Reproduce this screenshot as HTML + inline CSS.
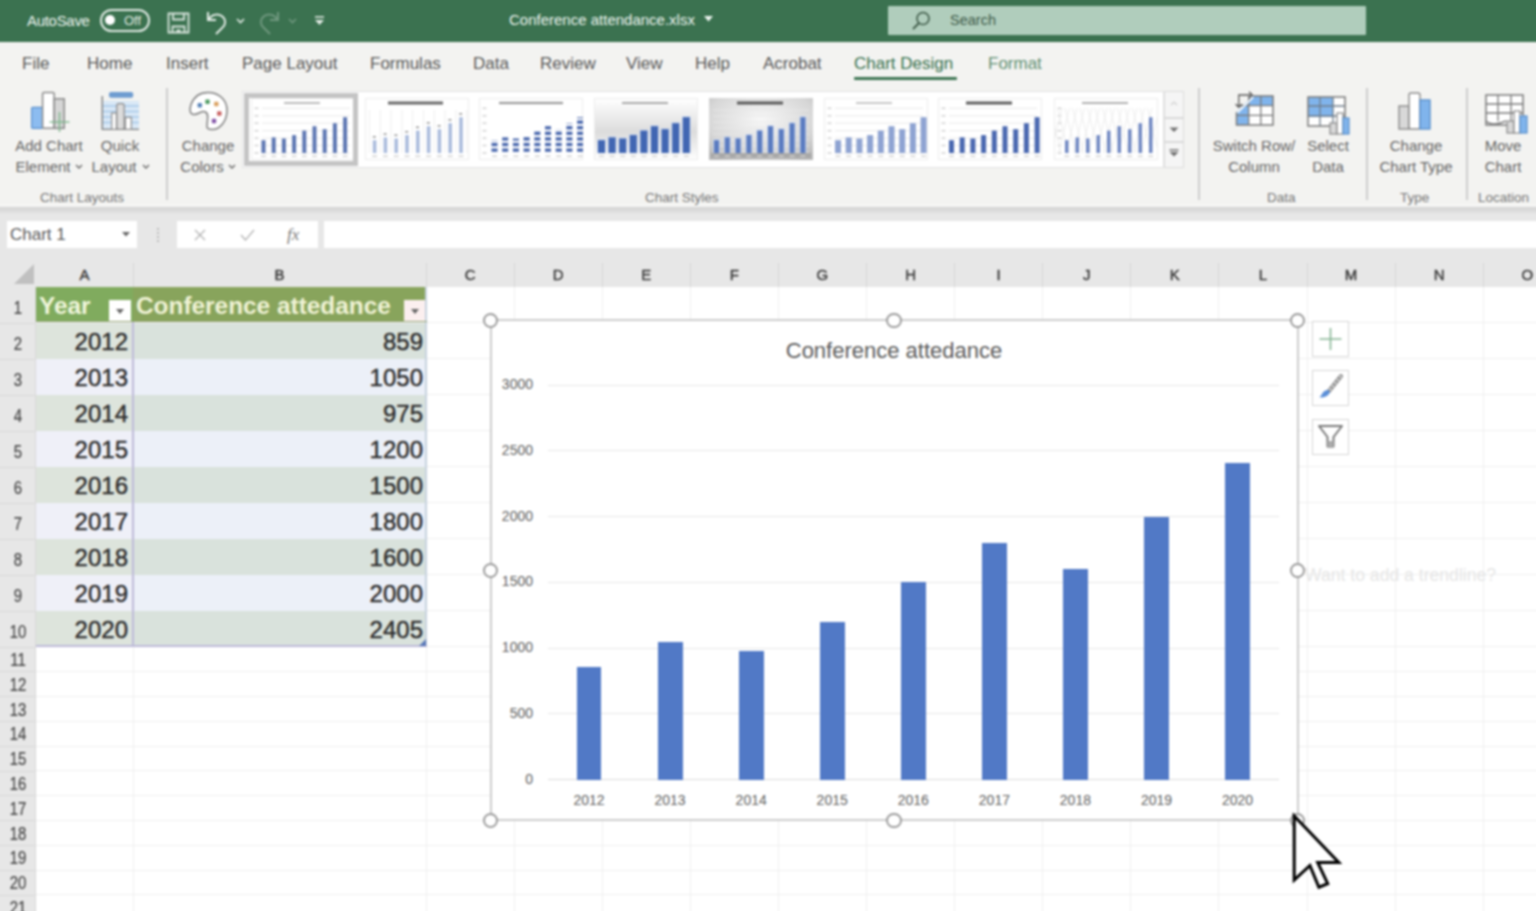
<!DOCTYPE html>
<html><head><meta charset="utf-8">
<style>
*{margin:0;padding:0;box-sizing:border-box}
html,body{width:1536px;height:911px;overflow:hidden;background:#fff;font-family:"Liberation Sans",sans-serif}
#root{position:absolute;left:0;top:0;width:1536px;height:911px;filter:blur(1px)}
.a{position:absolute}
.t{position:absolute;white-space:nowrap;line-height:1}
.tab{font-size:17px;color:#585858;top:55px}
.rl{font-size:15px;color:#656565;text-align:center}
.gl{font-size:13.5px;color:#767676}
.sep{position:absolute;width:1.5px;background:#cdcdcd;top:88px;height:112px}
.rh{position:absolute;left:0;width:36px;color:#4a4a4a;font-size:15px;text-align:center;-webkit-text-stroke:0.2px #4a4a4a}
.rh span{display:inline-block;transform:scaleY(1.2)}
.ch{position:absolute;top:262px;height:25px;color:#3a3a3a;font-size:15px;text-align:center;line-height:25px;-webkit-text-stroke:0.4px #3a3a3a}
.cell{position:absolute;font-size:24px;color:#2e2e2e;text-align:right;line-height:36px;-webkit-text-stroke:0.45px #2e2e2e}
</style></head><body><div id="root">

<div class="a" style="left:-20px;top:-20px;width:1576px;height:62px;background:#3b7250"></div>
<div class="a" style="left:-20px;top:42px;width:1576px;height:165px;background:#f3f3f1"></div>
<div class="a" style="left:-20px;top:207px;width:1576px;height:80px;background:#e7e7e7"></div>
<div class="a" style="left:-20px;top:204px;width:1576px;height:2px;background:#f6f6f5"></div><div class="a" style="left:-20px;top:207px;width:1576px;height:7px;background:linear-gradient(#d6d6d6,#d8d8d8 40%,#e7e7e7)"></div>

<div class="t" style="left:27px;top:13px;font-size:15px;color:#eef5f0;letter-spacing:-0.3px">AutoSave</div>
<div class="a" style="left:100px;top:9px;width:50px;height:23px;border:2px solid #dfe9e2;border-radius:12px"></div>
<div class="a" style="left:105px;top:15px;width:10px;height:10px;border-radius:50%;background:#fff"></div>
<div class="t" style="left:124px;top:14px;font-size:13px;color:#e0ebe3">Off</div>
<svg class="a" style="left:167px;top:12px" width="24" height="22" viewBox="0 0 24 22"><path d="M1.5 1.5h20v19h-20z" fill="none" stroke="#d8e4dc" stroke-width="1.8"/><path d="M6 1.5v6h11v-6M5.5 20.5v-6h12v6" fill="none" stroke="#d8e4dc" stroke-width="1.8"/><path d="M9.5 20.5v-3h4v3" fill="#d8e4dc"/></svg>
<svg class="a" style="left:204px;top:9px" width="26" height="26" viewBox="0 0 26 26"><path d="M4 3v8h8" fill="none" stroke="#e2ebe5" stroke-width="2"/><path d="M5 10c3-5 10-6 14-2 3 3 3 8-1 11l-6 6" fill="none" stroke="#e2ebe5" stroke-width="2"/></svg>
<svg class="a" style="left:236px;top:18px" width="9" height="6" viewBox="0 0 9 6"><path d="M1 1l3.5 3.5L8 1" fill="none" stroke="#e2ebe5" stroke-width="1.6"/></svg>
<svg class="a" style="left:256px;top:9px;opacity:.3" width="26" height="26" viewBox="0 0 26 26"><path d="M22 3v8h-8" fill="none" stroke="#e6eee8" stroke-width="2"/><path d="M21 10c-3-5-10-6-14-2-3 3-3 8 1 11l6 6" fill="none" stroke="#e6eee8" stroke-width="2"/></svg>
<svg class="a" style="left:288px;top:18px;opacity:.3" width="9" height="6" viewBox="0 0 9 6"><path d="M1 1l3.5 3.5L8 1" fill="none" stroke="#e6eee8" stroke-width="1.6"/></svg>
<svg class="a" style="left:314px;top:15px" width="11" height="12" viewBox="0 0 11 12"><path d="M1 2h9" stroke="#e2ebe5" stroke-width="1.6"/><path d="M1 5h9l-4.5 5z" fill="#e2ebe5"/></svg>
<div class="t" style="left:509px;top:12px;font-size:15px;color:#eef5f0">Conference attendance.xlsx</div>
<svg class="a" style="left:704px;top:16px" width="9" height="6" viewBox="0 0 9 6"><path d="M0 0h9L4.5 5.5z" fill="#eef5f0"/></svg>
<div class="a" style="left:888px;top:6px;width:478px;height:29px;background:#b0cdbc;border-radius:1px"></div>
<svg class="a" style="left:910px;top:10px" width="22" height="22" viewBox="0 0 22 22"><circle cx="13" cy="8.5" r="6" fill="none" stroke="#3e5a48" stroke-width="1.6"/><path d="M9 13l-6 6" stroke="#3e5a48" stroke-width="1.8"/></svg>
<div class="t" style="left:950px;top:13px;font-size:14.5px;color:#3e5a48">Search</div>

<div class="t tab" style="left:22px;color:#585858">File</div>
<div class="t tab" style="left:87px;color:#585858">Home</div>
<div class="t tab" style="left:166px;color:#585858">Insert</div>
<div class="t tab" style="left:242px;color:#585858">Page Layout</div>
<div class="t tab" style="left:370px;color:#585858">Formulas</div>
<div class="t tab" style="left:473px;color:#585858">Data</div>
<div class="t tab" style="left:540px;color:#585858">Review</div>
<div class="t tab" style="left:626px;color:#585858">View</div>
<div class="t tab" style="left:695px;color:#585858">Help</div>
<div class="t tab" style="left:763px;color:#585858">Acrobat</div>
<div class="t tab" style="left:854px;color:#36704c">Chart Design</div>
<div class="t tab" style="left:988px;color:#5f8f71">Format</div>
<div class="a" style="left:854px;top:77px;width:103px;height:3px;background:#3c7452;border-radius:1px"></div>

<svg class="a" style="left:29px;top:89px" width="44" height="46" viewBox="0 0 44 46">
 <rect x="2.6" y="18.3" width="11" height="21" rx="1" fill="#8cbcf0" stroke="#5a8fcc" stroke-width="1.2"/>
 <rect x="13.6" y="3.6" width="11.6" height="35.7" rx="1.5" fill="#fff" stroke="#8a8a8a" stroke-width="1.5"/>
 <rect x="25.2" y="9.8" width="10" height="29.5" fill="#d6d6d6" stroke="#8a8a8a" stroke-width="1.5"/>
 <path d="M30.5 23v20M20.5 33h20" stroke="#78b488" stroke-width="1.6" opacity=".85"/>
</svg>
<svg class="a" style="left:100px;top:89px" width="42" height="44" viewBox="0 0 42 44">
 <rect x="9" y="2.9" width="24.2" height="5.8" rx="2" fill="#6e9cd0"/>
 <rect x="2.3" y="11.8" width="36.7" height="28.6" fill="#d9e8f6"/>
 <path d="M2.3 17h36.7M2.3 22.5h36.7M2.3 28h36.7M2.3 33.5h36.7" stroke="#a8c8e8" stroke-width="1.6"/>
 <path d="M2.3 7v33.4H39" fill="none" stroke="#7e7e7e" stroke-width="1.4"/>
 <rect x="11.7" y="24" width="4.7" height="16.4" fill="#fff" stroke="#8a8a8a" stroke-width="1.2"/>
 <rect x="16.8" y="14.6" width="7.4" height="25.8" rx="2" fill="#dcdcdc" stroke="#8a8a8a" stroke-width="1.2"/>
 <rect x="25.4" y="28.3" width="5.9" height="12.1" fill="#fff" stroke="#8a8a8a" stroke-width="1.2"/>
</svg>
<svg class="a" style="left:188px;top:90px" width="42" height="42" viewBox="0 0 42 42">
 <path d="M19 36.5C19 30 21.5 24 17.5 22C13.5 20 10 25 5.5 24.5C1.5 24 1.5 19 3 14.5C6 6.5 12 2.5 20 2.5C31 2.5 39 10 39 20.5C39 31 32 39.5 24 39.5C21 39.5 19 38.5 19 36.5Z" fill="#fff" stroke="#808080" stroke-width="1.5"/>
 <rect x="9.6" y="13" width="4.4" height="4.4" rx="1.2" fill="#5a84b8"/><rect x="17.3" y="9.6" width="4.4" height="4.4" rx="1.2" fill="#4e9a62"/><rect x="26.1" y="11.8" width="4.4" height="4.4" rx="1.2" fill="#d9a060"/><rect x="29.1" y="21.3" width="4.4" height="4.4" rx="1.2" fill="#c86060"/><rect x="23.8" y="28.8" width="4.4" height="4.4" rx="1.2" fill="#8456a8"/>
</svg>
<div class="t rl" style="left:10px;top:138px;width:78px">Add Chart</div>
<div class="t rl" style="left:4px;top:159px;width:78px">Element</div><svg class="a" style="left:75px;top:164px" width="8" height="5" viewBox="0 0 8 5"><path d="M1 1l3 3 3-3" fill="none" stroke="#656565" stroke-width="1.3"/></svg>
<div class="t rl" style="left:84px;top:138px;width:72px">Quick</div>
<div class="t rl" style="left:78px;top:159px;width:72px">Layout</div><svg class="a" style="left:142px;top:164px" width="8" height="5" viewBox="0 0 8 5"><path d="M1 1l3 3 3-3" fill="none" stroke="#656565" stroke-width="1.3"/></svg>
<div class="t rl" style="left:172px;top:138px;width:72px">Change</div>
<div class="t rl" style="left:166px;top:159px;width:72px">Colors</div><svg class="a" style="left:228px;top:164px" width="8" height="5" viewBox="0 0 8 5"><path d="M1 1l3 3 3-3" fill="none" stroke="#656565" stroke-width="1.3"/></svg>
<div class="t gl" style="left:40px;top:191px">Chart Layouts</div>
<div class="sep" style="left:166px"></div>

<div class="a" style="left:242px;top:91px;width:922px;height:77px;background:#fff;border:1px solid #e2e2e2"></div>
<svg class="a" style="left:251px;top:98px" width="104" height="62" viewBox="0 0 104 62"><rect x="0.5" y="0.5" width="103" height="61" fill="#fff" stroke="#ececec"/><rect x="33" y="4.1" width="36" height="1.8" fill="#b4b4b4"/><path d="M11 10.3H99" stroke="#e4e4e4" stroke-width="0.8"/><rect x="3.5" y="9.6" width="4" height="1.4" fill="#cfcfcf"/><path d="M11 17.8H99" stroke="#e4e4e4" stroke-width="0.8"/><rect x="3.5" y="17.1" width="4" height="1.4" fill="#cfcfcf"/><path d="M11 25.2H99" stroke="#e4e4e4" stroke-width="0.8"/><rect x="3.5" y="24.5" width="4" height="1.4" fill="#cfcfcf"/><path d="M11 32.7H99" stroke="#e4e4e4" stroke-width="0.8"/><rect x="3.5" y="32.0" width="4" height="1.4" fill="#cfcfcf"/><path d="M11 40.1H99" stroke="#e4e4e4" stroke-width="0.8"/><rect x="3.5" y="39.4" width="4" height="1.4" fill="#cfcfcf"/><path d="M11 47.5H99" stroke="#e4e4e4" stroke-width="0.8"/><rect x="3.5" y="46.8" width="4" height="1.4" fill="#cfcfcf"/><path d="M11 55.0H99" stroke="#e4e4e4" stroke-width="0.8"/><rect x="3.5" y="54.3" width="4" height="1.4" fill="#cfcfcf"/><rect x="10.5" y="42.2" width="4" height="12.8" fill="#5c76b2"/><rect x="20.7" y="39.4" width="4" height="15.6" fill="#5c76b2"/><rect x="30.9" y="40.5" width="4" height="14.5" fill="#5c76b2"/><rect x="41.1" y="37.1" width="4" height="17.9" fill="#5c76b2"/><rect x="51.3" y="32.6" width="4" height="22.4" fill="#5c76b2"/><rect x="61.5" y="28.2" width="4" height="26.8" fill="#5c76b2"/><rect x="71.7" y="31.2" width="4" height="23.8" fill="#5c76b2"/><rect x="81.9" y="25.2" width="4" height="29.8" fill="#5c76b2"/><rect x="92.1" y="19.2" width="4" height="35.8" fill="#5c76b2"/><rect x="10.0" y="57.5" width="5" height="1.4" fill="#cfcfcf"/><rect x="20.2" y="57.5" width="5" height="1.4" fill="#cfcfcf"/><rect x="30.4" y="57.5" width="5" height="1.4" fill="#cfcfcf"/><rect x="40.6" y="57.5" width="5" height="1.4" fill="#cfcfcf"/><rect x="50.8" y="57.5" width="5" height="1.4" fill="#cfcfcf"/><rect x="61.0" y="57.5" width="5" height="1.4" fill="#cfcfcf"/><rect x="71.2" y="57.5" width="5" height="1.4" fill="#cfcfcf"/><rect x="81.4" y="57.5" width="5" height="1.4" fill="#cfcfcf"/><rect x="91.6" y="57.5" width="5" height="1.4" fill="#cfcfcf"/></svg>
<svg class="a" style="left:365px;top:98px" width="104" height="62" viewBox="0 0 104 62"><rect x="0.5" y="0.5" width="103" height="61" fill="#fff" stroke="#ececec"/><rect x="23" y="3.5" width="55" height="3" fill="#6a6a6a"/><path d="M4.5 12V55" stroke="#e8e8e8" stroke-width="0.7"/><path d="M15.3 12V55" stroke="#e8e8e8" stroke-width="0.7"/><path d="M26.1 12V55" stroke="#e8e8e8" stroke-width="0.7"/><path d="M36.9 12V55" stroke="#e8e8e8" stroke-width="0.7"/><path d="M47.7 12V55" stroke="#e8e8e8" stroke-width="0.7"/><path d="M58.5 12V55" stroke="#e8e8e8" stroke-width="0.7"/><path d="M69.3 12V55" stroke="#e8e8e8" stroke-width="0.7"/><path d="M80.1 12V55" stroke="#e8e8e8" stroke-width="0.7"/><path d="M90.9 12V55" stroke="#e8e8e8" stroke-width="0.7"/><path d="M101.7 12V55" stroke="#e8e8e8" stroke-width="0.7"/><rect x="7.8" y="42.2" width="3.6" height="12.8" fill="#aabbdc"/><rect x="7.8" y="38.2" width="3" height="1.4" fill="#8a8a8a"/><rect x="18.6" y="39.4" width="3.6" height="15.6" fill="#aabbdc"/><rect x="18.6" y="35.4" width="3" height="1.4" fill="#8a8a8a"/><rect x="29.4" y="40.5" width="3.6" height="14.5" fill="#aabbdc"/><rect x="29.4" y="36.5" width="3" height="1.4" fill="#8a8a8a"/><rect x="40.2" y="37.1" width="3.6" height="17.9" fill="#aabbdc"/><rect x="40.2" y="33.1" width="3" height="1.4" fill="#8a8a8a"/><rect x="51.0" y="32.6" width="3.6" height="22.4" fill="#aabbdc"/><rect x="51.0" y="28.6" width="3" height="1.4" fill="#8a8a8a"/><rect x="61.8" y="28.2" width="3.6" height="26.8" fill="#aabbdc"/><rect x="61.8" y="24.2" width="3" height="1.4" fill="#8a8a8a"/><rect x="72.6" y="31.2" width="3.6" height="23.8" fill="#aabbdc"/><rect x="72.6" y="27.2" width="3" height="1.4" fill="#8a8a8a"/><rect x="83.4" y="25.2" width="3.6" height="29.8" fill="#aabbdc"/><rect x="83.4" y="21.2" width="3" height="1.4" fill="#8a8a8a"/><rect x="94.2" y="19.2" width="3.6" height="35.8" fill="#aabbdc"/><rect x="94.2" y="15.2" width="3" height="1.4" fill="#8a8a8a"/><rect x="7.1" y="57.5" width="5" height="1.4" fill="#cfcfcf"/><rect x="17.9" y="57.5" width="5" height="1.4" fill="#cfcfcf"/><rect x="28.7" y="57.5" width="5" height="1.4" fill="#cfcfcf"/><rect x="39.5" y="57.5" width="5" height="1.4" fill="#cfcfcf"/><rect x="50.3" y="57.5" width="5" height="1.4" fill="#cfcfcf"/><rect x="61.1" y="57.5" width="5" height="1.4" fill="#cfcfcf"/><rect x="71.9" y="57.5" width="5" height="1.4" fill="#cfcfcf"/><rect x="82.7" y="57.5" width="5" height="1.4" fill="#cfcfcf"/><rect x="93.5" y="57.5" width="5" height="1.4" fill="#cfcfcf"/></svg>
<svg class="a" style="left:479px;top:98px" width="104" height="62" viewBox="0 0 104 62"><rect x="0.5" y="0.5" width="103" height="61" fill="#fff" stroke="#ececec"/><rect x="20" y="3.9" width="64" height="2.2" fill="#9a9a9a"/><rect x="3.5" y="9.6" width="4" height="1.4" fill="#cfcfcf"/><rect x="3.5" y="17.1" width="4" height="1.4" fill="#cfcfcf"/><rect x="3.5" y="24.5" width="4" height="1.4" fill="#cfcfcf"/><rect x="3.5" y="32.0" width="4" height="1.4" fill="#cfcfcf"/><rect x="3.5" y="39.4" width="4" height="1.4" fill="#cfcfcf"/><rect x="3.5" y="46.8" width="4" height="1.4" fill="#cfcfcf"/><rect x="3.5" y="54.3" width="4" height="1.4" fill="#cfcfcf"/><rect x="12.5" y="50.4" width="6" height="3.4" fill="#4a68ad"/><rect x="12.5" y="44.8" width="6" height="3.4" fill="#4a68ad"/><rect x="12.5" y="42.2" width="6" height="0.4" fill="#4a68ad"/><rect x="23.2" y="50.4" width="6" height="3.4" fill="#4a68ad"/><rect x="23.2" y="44.8" width="6" height="3.4" fill="#4a68ad"/><rect x="23.2" y="39.4" width="6" height="3.2" fill="#4a68ad"/><rect x="33.9" y="50.4" width="6" height="3.4" fill="#4a68ad"/><rect x="33.9" y="44.8" width="6" height="3.4" fill="#4a68ad"/><rect x="33.9" y="40.5" width="6" height="2.1" fill="#4a68ad"/><rect x="44.6" y="50.4" width="6" height="3.4" fill="#4a68ad"/><rect x="44.6" y="44.8" width="6" height="3.4" fill="#4a68ad"/><rect x="44.6" y="39.2" width="6" height="3.4" fill="#4a68ad"/><rect x="55.3" y="50.4" width="6" height="3.4" fill="#4a68ad"/><rect x="55.3" y="44.8" width="6" height="3.4" fill="#4a68ad"/><rect x="55.3" y="39.2" width="6" height="3.4" fill="#4a68ad"/><rect x="55.3" y="33.6" width="6" height="3.4" fill="#4a68ad"/><rect x="66.0" y="50.4" width="6" height="3.4" fill="#4a68ad"/><rect x="66.0" y="44.8" width="6" height="3.4" fill="#4a68ad"/><rect x="66.0" y="39.2" width="6" height="3.4" fill="#4a68ad"/><rect x="66.0" y="33.6" width="6" height="3.4" fill="#4a68ad"/><rect x="66.0" y="28.2" width="6" height="3.2" fill="#4a68ad"/><rect x="76.7" y="50.4" width="6" height="3.4" fill="#4a68ad"/><rect x="76.7" y="44.8" width="6" height="3.4" fill="#4a68ad"/><rect x="76.7" y="39.2" width="6" height="3.4" fill="#4a68ad"/><rect x="76.7" y="33.6" width="6" height="3.4" fill="#4a68ad"/><rect x="76.7" y="31.2" width="6" height="0.2" fill="#4a68ad"/><rect x="87.4" y="50.4" width="6" height="3.4" fill="#4a68ad"/><rect x="87.4" y="44.8" width="6" height="3.4" fill="#4a68ad"/><rect x="87.4" y="39.2" width="6" height="3.4" fill="#4a68ad"/><rect x="87.4" y="33.6" width="6" height="3.4" fill="#4a68ad"/><rect x="87.4" y="28.0" width="6" height="3.4" fill="#4a68ad"/><rect x="87.4" y="25.2" width="6" height="0.6" fill="#4a68ad"/><rect x="98.1" y="50.4" width="6" height="3.4" fill="#4a68ad"/><rect x="98.1" y="44.8" width="6" height="3.4" fill="#4a68ad"/><rect x="98.1" y="39.2" width="6" height="3.4" fill="#4a68ad"/><rect x="98.1" y="33.6" width="6" height="3.4" fill="#4a68ad"/><rect x="98.1" y="28.0" width="6" height="3.4" fill="#4a68ad"/><rect x="98.1" y="22.4" width="6" height="3.4" fill="#4a68ad"/><rect x="98.1" y="19.2" width="6" height="1.0" fill="#4a68ad"/><rect x="13.0" y="57.5" width="5" height="1.4" fill="#cfcfcf"/><rect x="23.7" y="57.5" width="5" height="1.4" fill="#cfcfcf"/><rect x="34.4" y="57.5" width="5" height="1.4" fill="#cfcfcf"/><rect x="45.1" y="57.5" width="5" height="1.4" fill="#cfcfcf"/><rect x="55.8" y="57.5" width="5" height="1.4" fill="#cfcfcf"/><rect x="66.5" y="57.5" width="5" height="1.4" fill="#cfcfcf"/><rect x="77.2" y="57.5" width="5" height="1.4" fill="#cfcfcf"/><rect x="87.9" y="57.5" width="5" height="1.4" fill="#cfcfcf"/><rect x="98.6" y="57.5" width="5" height="1.4" fill="#cfcfcf"/></svg>
<svg class="a" style="left:594px;top:98px" width="104" height="62" viewBox="0 0 104 62"><defs><linearGradient id="g3" x1="0" y1="0" x2="0" y2="1"><stop offset="0" stop-color="#fff"/><stop offset=".55" stop-color="#dcdcdc"/><stop offset=".85" stop-color="#f2f2f2"/><stop offset="1" stop-color="#fff"/></linearGradient></defs><rect x="0.5" y="0.5" width="103" height="61" fill="url(#g3)" stroke="#ececec"/><rect x="28" y="4.0" width="46" height="2" fill="#a8a8a8"/><rect x="3.2" y="41.4" width="8.6" height="13.6" fill="#c6d4ee"/><rect x="4.0" y="42.2" width="7" height="12.8" fill="#4166b2"/><rect x="13.8" y="38.6" width="8.6" height="16.4" fill="#c6d4ee"/><rect x="14.6" y="39.4" width="7" height="15.6" fill="#4166b2"/><rect x="24.4" y="39.7" width="8.6" height="15.3" fill="#c6d4ee"/><rect x="25.2" y="40.5" width="7" height="14.5" fill="#4166b2"/><rect x="35.0" y="36.3" width="8.6" height="18.7" fill="#c6d4ee"/><rect x="35.8" y="37.1" width="7" height="17.9" fill="#4166b2"/><rect x="45.6" y="31.8" width="8.6" height="23.2" fill="#c6d4ee"/><rect x="46.4" y="32.6" width="7" height="22.4" fill="#4166b2"/><rect x="56.2" y="27.4" width="8.6" height="27.6" fill="#c6d4ee"/><rect x="57.0" y="28.2" width="7" height="26.8" fill="#4166b2"/><rect x="66.8" y="30.4" width="8.6" height="24.6" fill="#c6d4ee"/><rect x="67.6" y="31.2" width="7" height="23.8" fill="#4166b2"/><rect x="77.4" y="24.4" width="8.6" height="30.6" fill="#c6d4ee"/><rect x="78.2" y="25.2" width="7" height="29.8" fill="#4166b2"/><rect x="88.0" y="18.4" width="8.6" height="36.6" fill="#c6d4ee"/><rect x="88.8" y="19.2" width="7" height="35.8" fill="#4166b2"/><rect x="5.0" y="57.5" width="5" height="1.4" fill="#cfcfcf"/><rect x="15.6" y="57.5" width="5" height="1.4" fill="#cfcfcf"/><rect x="26.2" y="57.5" width="5" height="1.4" fill="#cfcfcf"/><rect x="36.8" y="57.5" width="5" height="1.4" fill="#cfcfcf"/><rect x="47.4" y="57.5" width="5" height="1.4" fill="#cfcfcf"/><rect x="58.0" y="57.5" width="5" height="1.4" fill="#cfcfcf"/><rect x="68.6" y="57.5" width="5" height="1.4" fill="#cfcfcf"/><rect x="79.2" y="57.5" width="5" height="1.4" fill="#cfcfcf"/><rect x="89.8" y="57.5" width="5" height="1.4" fill="#cfcfcf"/></svg>
<svg class="a" style="left:709px;top:98px" width="104" height="62" viewBox="0 0 104 62"><defs><radialGradient id="g4" cx=".5" cy=".35" r=".75"><stop offset="0" stop-color="#f7f7f7"/><stop offset=".7" stop-color="#d6d6d6"/><stop offset="1" stop-color="#b8b8b8"/></radialGradient></defs><rect width="104" height="62" fill="url(#g4)"/><path d="M4 12.0H100" stroke="#e9e9e9" stroke-width="0.7"/><path d="M4 18.0H100" stroke="#e9e9e9" stroke-width="0.7"/><path d="M4 24.0H100" stroke="#e9e9e9" stroke-width="0.7"/><path d="M4 30.0H100" stroke="#e9e9e9" stroke-width="0.7"/><path d="M4 36.0H100" stroke="#e9e9e9" stroke-width="0.7"/><path d="M4 42.0H100" stroke="#e9e9e9" stroke-width="0.7"/><path d="M4 48.0H100" stroke="#e9e9e9" stroke-width="0.7"/><path d="M4 54.0H100" stroke="#e9e9e9" stroke-width="0.7"/><rect x="28" y="3.5" width="46" height="3" fill="#5a5a5a"/><rect x="4.2" y="41.4" width="6.6" height="13.6" fill="#c6d4ee"/><rect x="5.0" y="42.2" width="5" height="12.8" fill="#5a7bc0"/><rect x="15.0" y="38.6" width="6.6" height="16.4" fill="#c6d4ee"/><rect x="15.8" y="39.4" width="5" height="15.6" fill="#5a7bc0"/><rect x="25.8" y="39.7" width="6.6" height="15.3" fill="#c6d4ee"/><rect x="26.6" y="40.5" width="5" height="14.5" fill="#5a7bc0"/><rect x="36.6" y="36.3" width="6.6" height="18.7" fill="#c6d4ee"/><rect x="37.4" y="37.1" width="5" height="17.9" fill="#5a7bc0"/><rect x="47.4" y="31.8" width="6.6" height="23.2" fill="#c6d4ee"/><rect x="48.2" y="32.6" width="5" height="22.4" fill="#5a7bc0"/><rect x="58.2" y="27.4" width="6.6" height="27.6" fill="#c6d4ee"/><rect x="59.0" y="28.2" width="5" height="26.8" fill="#5a7bc0"/><rect x="69.0" y="30.4" width="6.6" height="24.6" fill="#c6d4ee"/><rect x="69.8" y="31.2" width="5" height="23.8" fill="#5a7bc0"/><rect x="79.8" y="24.4" width="6.6" height="30.6" fill="#c6d4ee"/><rect x="80.6" y="25.2" width="5" height="29.8" fill="#5a7bc0"/><rect x="90.6" y="18.4" width="6.6" height="36.6" fill="#c6d4ee"/><rect x="91.4" y="19.2" width="5" height="35.8" fill="#5a7bc0"/><rect x="2" y="55" width="100" height="5" fill="#a8a8a8"/><rect x="5.0" y="57.5" width="5" height="1.4" fill="#cfcfcf"/><rect x="15.8" y="57.5" width="5" height="1.4" fill="#cfcfcf"/><rect x="26.6" y="57.5" width="5" height="1.4" fill="#cfcfcf"/><rect x="37.4" y="57.5" width="5" height="1.4" fill="#cfcfcf"/><rect x="48.2" y="57.5" width="5" height="1.4" fill="#cfcfcf"/><rect x="59.0" y="57.5" width="5" height="1.4" fill="#cfcfcf"/><rect x="69.8" y="57.5" width="5" height="1.4" fill="#cfcfcf"/><rect x="80.6" y="57.5" width="5" height="1.4" fill="#cfcfcf"/><rect x="91.4" y="57.5" width="5" height="1.4" fill="#cfcfcf"/></svg>
<svg class="a" style="left:824px;top:98px" width="104" height="62" viewBox="0 0 104 62"><rect x="0.5" y="0.5" width="103" height="61" fill="#fff" stroke="#ececec"/><rect x="32" y="4.1" width="36" height="1.8" fill="#c0c0c0"/><path d="M11 10.3H99" stroke="#e4e4e4" stroke-width="0.8"/><rect x="3.5" y="9.6" width="4" height="1.4" fill="#cfcfcf"/><path d="M11 17.8H99" stroke="#e4e4e4" stroke-width="0.8"/><rect x="3.5" y="17.1" width="4" height="1.4" fill="#cfcfcf"/><path d="M11 25.2H99" stroke="#e4e4e4" stroke-width="0.8"/><rect x="3.5" y="24.5" width="4" height="1.4" fill="#cfcfcf"/><path d="M11 32.7H99" stroke="#e4e4e4" stroke-width="0.8"/><rect x="3.5" y="32.0" width="4" height="1.4" fill="#cfcfcf"/><path d="M11 40.1H99" stroke="#e4e4e4" stroke-width="0.8"/><rect x="3.5" y="39.4" width="4" height="1.4" fill="#cfcfcf"/><path d="M11 47.5H99" stroke="#e4e4e4" stroke-width="0.8"/><rect x="3.5" y="46.8" width="4" height="1.4" fill="#cfcfcf"/><path d="M11 55.0H99" stroke="#e4e4e4" stroke-width="0.8"/><rect x="3.5" y="54.3" width="4" height="1.4" fill="#cfcfcf"/><rect x="11.0" y="42.2" width="6" height="12.8" fill="#8ea3d2"/><rect x="21.7" y="39.4" width="6" height="15.6" fill="#8ea3d2"/><rect x="32.4" y="40.5" width="6" height="14.5" fill="#8ea3d2"/><rect x="43.1" y="37.1" width="6" height="17.9" fill="#8ea3d2"/><rect x="53.8" y="32.6" width="6" height="22.4" fill="#8ea3d2"/><rect x="64.5" y="28.2" width="6" height="26.8" fill="#8ea3d2"/><rect x="75.2" y="31.2" width="6" height="23.8" fill="#8ea3d2"/><rect x="85.9" y="25.2" width="6" height="29.8" fill="#8ea3d2"/><rect x="96.6" y="19.2" width="6" height="35.8" fill="#8ea3d2"/><rect x="11.5" y="57.5" width="5" height="1.4" fill="#cfcfcf"/><rect x="22.2" y="57.5" width="5" height="1.4" fill="#cfcfcf"/><rect x="32.9" y="57.5" width="5" height="1.4" fill="#cfcfcf"/><rect x="43.6" y="57.5" width="5" height="1.4" fill="#cfcfcf"/><rect x="54.3" y="57.5" width="5" height="1.4" fill="#cfcfcf"/><rect x="65.0" y="57.5" width="5" height="1.4" fill="#cfcfcf"/><rect x="75.7" y="57.5" width="5" height="1.4" fill="#cfcfcf"/><rect x="86.4" y="57.5" width="5" height="1.4" fill="#cfcfcf"/><rect x="97.1" y="57.5" width="5" height="1.4" fill="#cfcfcf"/></svg>
<svg class="a" style="left:938px;top:98px" width="104" height="62" viewBox="0 0 104 62"><rect x="0.5" y="0.5" width="103" height="61" fill="#fff" stroke="#ececec"/><rect x="28" y="3.5" width="46" height="3" fill="#5e5e5e"/><path d="M11 10.3H99" stroke="#e4e4e4" stroke-width="0.8"/><rect x="3.5" y="9.6" width="4" height="1.4" fill="#cfcfcf"/><path d="M11 17.8H99" stroke="#e4e4e4" stroke-width="0.8"/><rect x="3.5" y="17.1" width="4" height="1.4" fill="#cfcfcf"/><path d="M11 25.2H99" stroke="#e4e4e4" stroke-width="0.8"/><rect x="3.5" y="24.5" width="4" height="1.4" fill="#cfcfcf"/><path d="M11 32.7H99" stroke="#e4e4e4" stroke-width="0.8"/><rect x="3.5" y="32.0" width="4" height="1.4" fill="#cfcfcf"/><path d="M11 40.1H99" stroke="#e4e4e4" stroke-width="0.8"/><rect x="3.5" y="39.4" width="4" height="1.4" fill="#cfcfcf"/><path d="M11 47.5H99" stroke="#e4e4e4" stroke-width="0.8"/><rect x="3.5" y="46.8" width="4" height="1.4" fill="#cfcfcf"/><path d="M11 55.0H99" stroke="#e4e4e4" stroke-width="0.8"/><rect x="3.5" y="54.3" width="4" height="1.4" fill="#cfcfcf"/><rect x="11.0" y="42.2" width="5" height="12.8" fill="#4a68b0"/><rect x="21.7" y="39.4" width="5" height="15.6" fill="#4a68b0"/><rect x="32.4" y="40.5" width="5" height="14.5" fill="#4a68b0"/><rect x="43.1" y="37.1" width="5" height="17.9" fill="#4a68b0"/><rect x="53.8" y="32.6" width="5" height="22.4" fill="#4a68b0"/><rect x="64.5" y="28.2" width="5" height="26.8" fill="#4a68b0"/><rect x="75.2" y="31.2" width="5" height="23.8" fill="#4a68b0"/><rect x="85.9" y="25.2" width="5" height="29.8" fill="#4a68b0"/><rect x="96.6" y="19.2" width="5" height="35.8" fill="#4a68b0"/><rect x="11.0" y="57.5" width="5" height="1.4" fill="#cfcfcf"/><rect x="21.7" y="57.5" width="5" height="1.4" fill="#cfcfcf"/><rect x="32.4" y="57.5" width="5" height="1.4" fill="#cfcfcf"/><rect x="43.1" y="57.5" width="5" height="1.4" fill="#cfcfcf"/><rect x="53.8" y="57.5" width="5" height="1.4" fill="#cfcfcf"/><rect x="64.5" y="57.5" width="5" height="1.4" fill="#cfcfcf"/><rect x="75.2" y="57.5" width="5" height="1.4" fill="#cfcfcf"/><rect x="85.9" y="57.5" width="5" height="1.4" fill="#cfcfcf"/><rect x="96.6" y="57.5" width="5" height="1.4" fill="#cfcfcf"/></svg>
<svg class="a" style="left:1054px;top:98px" width="104" height="62" viewBox="0 0 104 62"><rect x="0.5" y="0.5" width="103" height="61" fill="#fff" stroke="#ececec"/><rect x="28" y="4.0" width="46" height="2" fill="#b0b0b0"/><rect x="3.5" y="9.6" width="4" height="1.4" fill="#cfcfcf"/><rect x="3.5" y="17.1" width="4" height="1.4" fill="#cfcfcf"/><rect x="3.5" y="24.5" width="4" height="1.4" fill="#cfcfcf"/><rect x="3.5" y="32.0" width="4" height="1.4" fill="#cfcfcf"/><rect x="3.5" y="39.4" width="4" height="1.4" fill="#cfcfcf"/><rect x="3.5" y="46.8" width="4" height="1.4" fill="#cfcfcf"/><rect x="3.5" y="54.3" width="4" height="1.4" fill="#cfcfcf"/><path d="M8.0 10l-11 45" stroke="#ebebeb" stroke-width="0.9"/><path d="M-4.0 10l11 45" stroke="#ebebeb" stroke-width="0.9"/><path d="M15.5 10l-11 45" stroke="#ebebeb" stroke-width="0.9"/><path d="M3.5 10l11 45" stroke="#ebebeb" stroke-width="0.9"/><path d="M23.0 10l-11 45" stroke="#ebebeb" stroke-width="0.9"/><path d="M11.0 10l11 45" stroke="#ebebeb" stroke-width="0.9"/><path d="M30.5 10l-11 45" stroke="#ebebeb" stroke-width="0.9"/><path d="M18.5 10l11 45" stroke="#ebebeb" stroke-width="0.9"/><path d="M38.0 10l-11 45" stroke="#ebebeb" stroke-width="0.9"/><path d="M26.0 10l11 45" stroke="#ebebeb" stroke-width="0.9"/><path d="M45.5 10l-11 45" stroke="#ebebeb" stroke-width="0.9"/><path d="M33.5 10l11 45" stroke="#ebebeb" stroke-width="0.9"/><path d="M53.0 10l-11 45" stroke="#ebebeb" stroke-width="0.9"/><path d="M41.0 10l11 45" stroke="#ebebeb" stroke-width="0.9"/><path d="M60.5 10l-11 45" stroke="#ebebeb" stroke-width="0.9"/><path d="M48.5 10l11 45" stroke="#ebebeb" stroke-width="0.9"/><path d="M68.0 10l-11 45" stroke="#ebebeb" stroke-width="0.9"/><path d="M56.0 10l11 45" stroke="#ebebeb" stroke-width="0.9"/><path d="M75.5 10l-11 45" stroke="#ebebeb" stroke-width="0.9"/><path d="M63.5 10l11 45" stroke="#ebebeb" stroke-width="0.9"/><path d="M83.0 10l-11 45" stroke="#ebebeb" stroke-width="0.9"/><path d="M71.0 10l11 45" stroke="#ebebeb" stroke-width="0.9"/><path d="M90.5 10l-11 45" stroke="#ebebeb" stroke-width="0.9"/><path d="M78.5 10l11 45" stroke="#ebebeb" stroke-width="0.9"/><path d="M98.0 10l-11 45" stroke="#ebebeb" stroke-width="0.9"/><path d="M86.0 10l11 45" stroke="#ebebeb" stroke-width="0.9"/><path d="M105.5 10l-11 45" stroke="#ebebeb" stroke-width="0.9"/><path d="M93.5 10l11 45" stroke="#ebebeb" stroke-width="0.9"/><rect x="11.0" y="42.2" width="3.5" height="12.8" fill="#6f87c2"/><rect x="21.5" y="39.4" width="3.5" height="15.6" fill="#6f87c2"/><rect x="32.0" y="40.5" width="3.5" height="14.5" fill="#6f87c2"/><rect x="42.5" y="37.1" width="3.5" height="17.9" fill="#6f87c2"/><rect x="53.0" y="32.6" width="3.5" height="22.4" fill="#6f87c2"/><rect x="63.5" y="28.2" width="3.5" height="26.8" fill="#6f87c2"/><rect x="74.0" y="31.2" width="3.5" height="23.8" fill="#6f87c2"/><rect x="84.5" y="25.2" width="3.5" height="29.8" fill="#6f87c2"/><rect x="95.0" y="19.2" width="3.5" height="35.8" fill="#6f87c2"/><rect x="10.2" y="57.5" width="5" height="1.4" fill="#cfcfcf"/><rect x="20.8" y="57.5" width="5" height="1.4" fill="#cfcfcf"/><rect x="31.2" y="57.5" width="5" height="1.4" fill="#cfcfcf"/><rect x="41.8" y="57.5" width="5" height="1.4" fill="#cfcfcf"/><rect x="52.2" y="57.5" width="5" height="1.4" fill="#cfcfcf"/><rect x="62.8" y="57.5" width="5" height="1.4" fill="#cfcfcf"/><rect x="73.2" y="57.5" width="5" height="1.4" fill="#cfcfcf"/><rect x="83.8" y="57.5" width="5" height="1.4" fill="#cfcfcf"/><rect x="94.2" y="57.5" width="5" height="1.4" fill="#cfcfcf"/></svg>
<div class="a" style="left:244px;top:93px;width:114px;height:73px;border:5px solid #c4c4c4"></div>

<div class="a" style="left:1164px;top:91px;width:20px;height:77px;border:1px solid #dcdcdc;background:#f5f5f5"></div>
<div class="a" style="left:1164px;top:117px;width:20px;height:2px;background:#d9d9d9"></div>
<div class="a" style="left:1164px;top:141px;width:20px;height:2px;background:#d9d9d9"></div>
<svg class="a" style="left:1170px;top:101px" width="8" height="5" viewBox="0 0 8 5"><path d="M1 4l3-3 3 3" fill="none" stroke="#cfcfcf" stroke-width="1.1"/></svg>
<svg class="a" style="left:1169px;top:127px" width="10" height="6" viewBox="0 0 10 6"><path d="M0.5 0.5h9L5 5z" fill="#707070"/></svg>
<svg class="a" style="left:1169px;top:149px" width="10" height="9" viewBox="0 0 10 9"><path d="M0.5 1h9" stroke="#707070" stroke-width="1.5"/><path d="M0.5 3h9L5 7.5z" fill="#707070"/></svg>
<div class="t gl" style="left:645px;top:191px">Chart Styles</div>
<div class="sep" style="left:1198px"></div>
<svg class="a" style="left:1230px;top:88px" width="48" height="40" viewBox="0 0 48 40">
 <path d="M22.7 8H43v9.7H18.7V37H6.5V24.2z" fill="#80b4ec"/>
 <rect x="18.7" y="17.7" width="24.3" height="19.3" fill="#fff"/>
 <path d="M6.5 17.7h36.5M6.5 27.3h36.5M18.7 8v29M30.8 8v29" stroke="#7a7a7a" stroke-width="1.3"/>
 <path d="M7.5 24.8L23.3 9" stroke="#fff" stroke-width="1.6"/>
 <path d="M6.5 24.2V37H43V8H22.7" fill="none" stroke="#7a7a7a" stroke-width="1.5"/>
 <path d="M8.8 19V7h13" fill="none" stroke="#5a5a5a" stroke-width="1.3"/>
 <path d="M19 3.8l3.3 3.2-3.3 3.2M5.6 16l3.2 3.3 3.2-3.3" fill="none" stroke="#5a5a5a" stroke-width="1.3"/>
</svg>
<svg class="a" style="left:1306px;top:94.5px" width="46" height="42" viewBox="0 0 46 42">
 <rect x="2" y="2" width="37" height="29" fill="#fff"/>
 <rect x="2" y="2" width="25" height="20" fill="#80b4ec"/>
 <path d="M2 11h37M2 21h37M14 2v29M27 2v29" stroke="#707d8a" stroke-width="1.3"/>
 <rect x="2" y="2" width="37" height="29" fill="none" stroke="#7a7a7a" stroke-width="1.5"/>
 <rect x="24" y="28" width="7" height="11" fill="#d8d8d8" stroke="#8a8a8a" stroke-width="1.2"/>
 <rect x="31" y="18" width="6" height="21" fill="#fff" stroke="#8a8a8a" stroke-width="1.2"/>
 <rect x="37" y="23" width="6" height="16" fill="#80b4ec" stroke="#5a90cc" stroke-width="1.2"/>
</svg>
<div class="t rl" style="left:1204px;top:138px;width:100px">Switch Row/</div>
<div class="t rl" style="left:1204px;top:159px;width:100px">Column</div>
<div class="t rl" style="left:1300px;top:138px;width:56px">Select</div>
<div class="t rl" style="left:1300px;top:159px;width:56px">Data</div>
<div class="t gl" style="left:1267px;top:191px">Data</div>
<div class="sep" style="left:1366px"></div>
<svg class="a" style="left:1396px;top:90px" width="38" height="42" viewBox="0 0 38 42">
 <rect x="3" y="16" width="10" height="23" fill="#d8d8d8" stroke="#8a8a8a" stroke-width="1.4"/>
 <rect x="13" y="3" width="11" height="36" rx="2" fill="#fff" stroke="#8a8a8a" stroke-width="1.4"/>
 <rect x="24" y="10" width="10" height="29" fill="#80b4ec" stroke="#5a90cc" stroke-width="1.4"/>
</svg>
<div class="t rl" style="left:1370px;top:138px;width:92px">Change</div>
<div class="t rl" style="left:1370px;top:159px;width:92px">Chart Type</div>
<div class="t gl" style="left:1400px;top:191px">Type</div>
<div class="sep" style="left:1466px"></div>
<svg class="a" style="left:1484px;top:93px" width="46" height="43" viewBox="0 0 46 43">
 <rect x="2" y="2" width="37" height="30" fill="#fff" stroke="#7a7a7a" stroke-width="1.5"/>
 <path d="M2 11h37M2 20h37M14 2v30M27 2v30" stroke="#7a7a7a" stroke-width="1.3"/>
 <path d="M2 28c4 4 12 4 20 0" fill="#fff" stroke="#7a7a7a" stroke-width="1.4"/>
 <rect x="23" y="28" width="7" height="12" fill="#d8d8d8" stroke="#8a8a8a" stroke-width="1.2"/>
 <rect x="30" y="18" width="6" height="22" fill="#fff" stroke="#8a8a8a" stroke-width="1.2"/>
 <rect x="36" y="23" width="7" height="17" fill="#80b4ec" stroke="#5a90cc" stroke-width="1.2"/>
</svg>
<div class="t rl" style="left:1470px;top:138px;width:66px">Move</div>
<div class="t rl" style="left:1470px;top:159px;width:66px">Chart</div>
<div class="t gl" style="left:1478px;top:191px">Location</div>


<div class="a" style="left:7px;top:221px;width:130px;height:27px;background:#fff"></div>
<div class="t" style="left:10px;top:226px;font-size:17px;color:#585858">Chart 1</div>
<svg class="a" style="left:122px;top:232px" width="8" height="5" viewBox="0 0 8 5"><path d="M0 0h8L4 4.5z" fill="#666"/></svg>
<div class="a" style="left:157px;top:228px;width:2px;height:14px;background:repeating-linear-gradient(#bcbcbc 0 2px,transparent 2px 4px)"></div>
<div class="a" style="left:177px;top:221px;width:141px;height:27px;background:#fff"></div>
<svg class="a" style="left:193px;top:228px" width="14" height="14" viewBox="0 0 14 14"><path d="M2 2l10 10M12 2L2 12" stroke="#b4b4b4" stroke-width="1.3"/></svg>
<svg class="a" style="left:239px;top:228px" width="17" height="14" viewBox="0 0 17 14"><path d="M2 7l4.5 5L15 2" fill="none" stroke="#b4b4b4" stroke-width="1.3"/></svg>
<div class="t" style="left:287px;top:226px;font-size:17px;color:#7a7a7a;font-family:'Liberation Serif',serif;font-style:italic">fx</div>
<div class="a" style="left:324px;top:221px;width:1232px;height:27px;background:#fff"></div>
<svg class="a" style="left:14px;top:264px" width="20" height="20" viewBox="0 0 20 20"><path d="M20 0V20H0z" fill="#c0c0c0"/></svg>

<div class="ch" style="left:36.0px;width:97.0px">A</div>
<div class="a" style="left:132.5px;top:263px;width:1px;height:24px;background:#d6d6d6"></div>
<div class="ch" style="left:133.0px;width:293.0px">B</div>
<div class="a" style="left:425.5px;top:263px;width:1px;height:24px;background:#d6d6d6"></div>
<div class="ch" style="left:426.0px;width:88.1px">C</div>
<div class="a" style="left:513.6px;top:263px;width:1px;height:24px;background:#d6d6d6"></div>
<div class="ch" style="left:514.1px;width:88.1px">D</div>
<div class="a" style="left:601.7px;top:263px;width:1px;height:24px;background:#d6d6d6"></div>
<div class="ch" style="left:602.2px;width:88.1px">E</div>
<div class="a" style="left:689.8px;top:263px;width:1px;height:24px;background:#d6d6d6"></div>
<div class="ch" style="left:690.3px;width:88.1px">F</div>
<div class="a" style="left:777.9px;top:263px;width:1px;height:24px;background:#d6d6d6"></div>
<div class="ch" style="left:778.4px;width:88.1px">G</div>
<div class="a" style="left:866.0px;top:263px;width:1px;height:24px;background:#d6d6d6"></div>
<div class="ch" style="left:866.5px;width:88.1px">H</div>
<div class="a" style="left:954.1px;top:263px;width:1px;height:24px;background:#d6d6d6"></div>
<div class="ch" style="left:954.6px;width:88.1px">I</div>
<div class="a" style="left:1042.2px;top:263px;width:1px;height:24px;background:#d6d6d6"></div>
<div class="ch" style="left:1042.7px;width:88.1px">J</div>
<div class="a" style="left:1130.3px;top:263px;width:1px;height:24px;background:#d6d6d6"></div>
<div class="ch" style="left:1130.8px;width:88.1px">K</div>
<div class="a" style="left:1218.4px;top:263px;width:1px;height:24px;background:#d6d6d6"></div>
<div class="ch" style="left:1218.9px;width:88.1px">L</div>
<div class="a" style="left:1306.5px;top:263px;width:1px;height:24px;background:#d6d6d6"></div>
<div class="ch" style="left:1307.0px;width:88.1px">M</div>
<div class="a" style="left:1394.6px;top:263px;width:1px;height:24px;background:#d6d6d6"></div>
<div class="ch" style="left:1395.1px;width:88.1px">N</div>
<div class="a" style="left:1482.7px;top:263px;width:1px;height:24px;background:#d6d6d6"></div>
<div class="ch" style="left:1483.2px;width:88.1px">O</div>
<div class="a" style="left:1570.8px;top:263px;width:1px;height:24px;background:#d6d6d6"></div>
<div class="a" style="left:36px;top:287px;width:1520px;height:650px;background:#fff"></div>
<div class="a" style="left:-20px;top:287px;width:56px;height:650px;background:#e7e7e7"></div>
<div class="a" style="left:35px;top:287px;width:1px;height:650px;background:#d9d9d9"></div>
<div class="rh" style="top:287.0px;height:36.0px;line-height:42.0px"><span>1</span></div>
<div class="a" style="left:-20px;top:322.5px;width:56px;height:1px;background:#d9d9d9"></div>
<div class="a" style="left:36px;top:321.8px;width:1520px;height:1px;background:#efefef"></div>
<div class="rh" style="top:323.0px;height:36.0px;line-height:42.0px"><span>2</span></div>
<div class="a" style="left:-20px;top:358.5px;width:56px;height:1px;background:#d9d9d9"></div>
<div class="a" style="left:36px;top:357.8px;width:1520px;height:1px;background:#efefef"></div>
<div class="rh" style="top:359.0px;height:36.0px;line-height:42.0px"><span>3</span></div>
<div class="a" style="left:-20px;top:394.5px;width:56px;height:1px;background:#d9d9d9"></div>
<div class="a" style="left:36px;top:393.8px;width:1520px;height:1px;background:#efefef"></div>
<div class="rh" style="top:395.0px;height:36.0px;line-height:42.0px"><span>4</span></div>
<div class="a" style="left:-20px;top:430.5px;width:56px;height:1px;background:#d9d9d9"></div>
<div class="a" style="left:36px;top:429.8px;width:1520px;height:1px;background:#efefef"></div>
<div class="rh" style="top:431.0px;height:36.0px;line-height:42.0px"><span>5</span></div>
<div class="a" style="left:-20px;top:466.5px;width:56px;height:1px;background:#d9d9d9"></div>
<div class="a" style="left:36px;top:465.8px;width:1520px;height:1px;background:#efefef"></div>
<div class="rh" style="top:467.0px;height:36.0px;line-height:42.0px"><span>6</span></div>
<div class="a" style="left:-20px;top:502.5px;width:56px;height:1px;background:#d9d9d9"></div>
<div class="a" style="left:36px;top:501.8px;width:1520px;height:1px;background:#efefef"></div>
<div class="rh" style="top:503.0px;height:36.0px;line-height:42.0px"><span>7</span></div>
<div class="a" style="left:-20px;top:538.5px;width:56px;height:1px;background:#d9d9d9"></div>
<div class="a" style="left:36px;top:537.8px;width:1520px;height:1px;background:#efefef"></div>
<div class="rh" style="top:539.0px;height:36.0px;line-height:42.0px"><span>8</span></div>
<div class="a" style="left:-20px;top:574.5px;width:56px;height:1px;background:#d9d9d9"></div>
<div class="a" style="left:36px;top:573.8px;width:1520px;height:1px;background:#efefef"></div>
<div class="rh" style="top:575.0px;height:36.0px;line-height:42.0px"><span>9</span></div>
<div class="a" style="left:-20px;top:610.5px;width:56px;height:1px;background:#d9d9d9"></div>
<div class="a" style="left:36px;top:609.8px;width:1520px;height:1px;background:#efefef"></div>
<div class="rh" style="top:611.0px;height:36.0px;line-height:42.0px"><span>10</span></div>
<div class="a" style="left:-20px;top:646.5px;width:56px;height:1px;background:#d9d9d9"></div>
<div class="a" style="left:36px;top:645.8px;width:1520px;height:1px;background:#efefef"></div>
<div class="rh" style="top:647.0px;height:24.8px;line-height:25.8px"><span>11</span></div>
<div class="a" style="left:-20px;top:671.3px;width:56px;height:1px;background:#d9d9d9"></div>
<div class="a" style="left:36px;top:671.1px;width:1520px;height:1px;background:#efefef"></div>
<div class="rh" style="top:671.8px;height:24.8px;line-height:25.8px"><span>12</span></div>
<div class="a" style="left:-20px;top:696.1px;width:56px;height:1px;background:#d9d9d9"></div>
<div class="a" style="left:36px;top:695.9px;width:1520px;height:1px;background:#efefef"></div>
<div class="rh" style="top:696.6px;height:24.8px;line-height:25.8px"><span>13</span></div>
<div class="a" style="left:-20px;top:720.9px;width:56px;height:1px;background:#d9d9d9"></div>
<div class="a" style="left:36px;top:720.7px;width:1520px;height:1px;background:#efefef"></div>
<div class="rh" style="top:721.4px;height:24.8px;line-height:25.8px"><span>14</span></div>
<div class="a" style="left:-20px;top:745.7px;width:56px;height:1px;background:#d9d9d9"></div>
<div class="a" style="left:36px;top:745.5px;width:1520px;height:1px;background:#efefef"></div>
<div class="rh" style="top:746.2px;height:24.8px;line-height:25.8px"><span>15</span></div>
<div class="a" style="left:-20px;top:770.5px;width:56px;height:1px;background:#d9d9d9"></div>
<div class="a" style="left:36px;top:770.3px;width:1520px;height:1px;background:#efefef"></div>
<div class="rh" style="top:771.0px;height:24.8px;line-height:25.8px"><span>16</span></div>
<div class="a" style="left:-20px;top:795.3px;width:56px;height:1px;background:#d9d9d9"></div>
<div class="a" style="left:36px;top:795.1px;width:1520px;height:1px;background:#efefef"></div>
<div class="rh" style="top:795.8px;height:24.8px;line-height:25.8px"><span>17</span></div>
<div class="a" style="left:-20px;top:820.1px;width:56px;height:1px;background:#d9d9d9"></div>
<div class="a" style="left:36px;top:819.9px;width:1520px;height:1px;background:#efefef"></div>
<div class="rh" style="top:820.6px;height:24.8px;line-height:25.8px"><span>18</span></div>
<div class="a" style="left:-20px;top:844.9px;width:56px;height:1px;background:#d9d9d9"></div>
<div class="a" style="left:36px;top:844.7px;width:1520px;height:1px;background:#efefef"></div>
<div class="rh" style="top:845.4px;height:24.8px;line-height:25.8px"><span>19</span></div>
<div class="a" style="left:-20px;top:869.7px;width:56px;height:1px;background:#d9d9d9"></div>
<div class="a" style="left:36px;top:869.5px;width:1520px;height:1px;background:#efefef"></div>
<div class="rh" style="top:870.2px;height:24.8px;line-height:25.8px"><span>20</span></div>
<div class="a" style="left:-20px;top:894.5px;width:56px;height:1px;background:#d9d9d9"></div>
<div class="a" style="left:36px;top:894.3px;width:1520px;height:1px;background:#efefef"></div>
<div class="rh" style="top:895.0px;height:24.8px;line-height:25.8px"><span>21</span></div>
<div class="a" style="left:-20px;top:919.3px;width:56px;height:1px;background:#d9d9d9"></div>
<div class="a" style="left:36px;top:919.1px;width:1520px;height:1px;background:#efefef"></div>
<div class="rh" style="top:919.8px;height:24.8px;line-height:25.8px"><span>22</span></div>
<div class="a" style="left:-20px;top:944.1px;width:56px;height:1px;background:#d9d9d9"></div>
<div class="a" style="left:36px;top:943.9px;width:1520px;height:1px;background:#efefef"></div>
<div class="a" style="left:132.5px;top:287px;width:1px;height:650px;background:#efefef"></div>
<div class="a" style="left:425.5px;top:287px;width:1px;height:650px;background:#efefef"></div>
<div class="a" style="left:513.6px;top:287px;width:1px;height:650px;background:#efefef"></div>
<div class="a" style="left:601.7px;top:287px;width:1px;height:650px;background:#efefef"></div>
<div class="a" style="left:689.8px;top:287px;width:1px;height:650px;background:#efefef"></div>
<div class="a" style="left:777.9px;top:287px;width:1px;height:650px;background:#efefef"></div>
<div class="a" style="left:866.0px;top:287px;width:1px;height:650px;background:#efefef"></div>
<div class="a" style="left:954.1px;top:287px;width:1px;height:650px;background:#efefef"></div>
<div class="a" style="left:1042.2px;top:287px;width:1px;height:650px;background:#efefef"></div>
<div class="a" style="left:1130.3px;top:287px;width:1px;height:650px;background:#efefef"></div>
<div class="a" style="left:1218.4px;top:287px;width:1px;height:650px;background:#efefef"></div>
<div class="a" style="left:1306.5px;top:287px;width:1px;height:650px;background:#efefef"></div>
<div class="a" style="left:1394.6px;top:287px;width:1px;height:650px;background:#efefef"></div>
<div class="a" style="left:1482.7px;top:287px;width:1px;height:650px;background:#efefef"></div>
<div class="a" style="left:1570.8px;top:287px;width:1px;height:650px;background:#efefef"></div>
<div class="a" style="left:36px;top:287px;width:97px;height:35px;background:#80ab5e"></div>
<div class="a" style="left:133px;top:287px;width:293px;height:35px;background:#88a45c"></div>
<div class="t" style="left:39px;top:294px;font-size:24.4px;font-weight:bold;color:#f0f6dc">Year</div>
<div class="t" style="left:136px;top:294px;font-size:24.4px;font-weight:bold;color:#f0f3d6">Conference attedance</div>
<div class="a" style="left:109px;top:300px;width:22px;height:22px;background:#fff"></div><svg class="a" style="left:116px;top:309px" width="8" height="5" viewBox="0 0 8 5"><path d="M0 0h8L4 5z" fill="#666"/></svg>
<div class="a" style="left:404px;top:300px;width:22px;height:22px;background:#fbefef"></div><svg class="a" style="left:411px;top:309px" width="8" height="5" viewBox="0 0 8 5"><path d="M0 0h8L4 5z" fill="#666"/></svg>
<div class="a" style="left:36px;top:323px;width:97px;height:36px;background:#dde4dc"></div>
<div class="a" style="left:133px;top:323px;width:293px;height:36px;background:#d9e2dc"></div>
<div class="cell" style="left:36px;top:324px;width:92px">2012</div>
<div class="cell" style="left:133px;top:324px;width:290px">859</div>
<div class="a" style="left:36px;top:359px;width:97px;height:36px;background:#eff0f8"></div>
<div class="a" style="left:133px;top:359px;width:293px;height:36px;background:#ecf0f8"></div>
<div class="cell" style="left:36px;top:360px;width:92px">2013</div>
<div class="cell" style="left:133px;top:360px;width:290px">1050</div>
<div class="a" style="left:36px;top:395px;width:97px;height:36px;background:#dde4dc"></div>
<div class="a" style="left:133px;top:395px;width:293px;height:36px;background:#d9e2dc"></div>
<div class="cell" style="left:36px;top:396px;width:92px">2014</div>
<div class="cell" style="left:133px;top:396px;width:290px">975</div>
<div class="a" style="left:36px;top:431px;width:97px;height:36px;background:#eff0f8"></div>
<div class="a" style="left:133px;top:431px;width:293px;height:36px;background:#ecf0f8"></div>
<div class="cell" style="left:36px;top:432px;width:92px">2015</div>
<div class="cell" style="left:133px;top:432px;width:290px">1200</div>
<div class="a" style="left:36px;top:467px;width:97px;height:36px;background:#dde4dc"></div>
<div class="a" style="left:133px;top:467px;width:293px;height:36px;background:#d9e2dc"></div>
<div class="cell" style="left:36px;top:468px;width:92px">2016</div>
<div class="cell" style="left:133px;top:468px;width:290px">1500</div>
<div class="a" style="left:36px;top:503px;width:97px;height:36px;background:#eff0f8"></div>
<div class="a" style="left:133px;top:503px;width:293px;height:36px;background:#ecf0f8"></div>
<div class="cell" style="left:36px;top:504px;width:92px">2017</div>
<div class="cell" style="left:133px;top:504px;width:290px">1800</div>
<div class="a" style="left:36px;top:539px;width:97px;height:36px;background:#dde4dc"></div>
<div class="a" style="left:133px;top:539px;width:293px;height:36px;background:#d9e2dc"></div>
<div class="cell" style="left:36px;top:540px;width:92px">2018</div>
<div class="cell" style="left:133px;top:540px;width:290px">1600</div>
<div class="a" style="left:36px;top:575px;width:97px;height:36px;background:#eff0f8"></div>
<div class="a" style="left:133px;top:575px;width:293px;height:36px;background:#ecf0f8"></div>
<div class="cell" style="left:36px;top:576px;width:92px">2019</div>
<div class="cell" style="left:133px;top:576px;width:290px">2000</div>
<div class="a" style="left:36px;top:611px;width:97px;height:36px;background:#dde4dc"></div>
<div class="a" style="left:133px;top:611px;width:293px;height:36px;background:#d9e2dc"></div>
<div class="cell" style="left:36px;top:612px;width:92px">2020</div>
<div class="cell" style="left:133px;top:612px;width:290px">2405</div>
<div class="a" style="left:132px;top:322px;width:2px;height:325px;background:#bdbad8"></div>
<div class="a" style="left:425px;top:287px;width:2px;height:360px;background:#c6d2de"></div>
<div class="a" style="left:36px;top:645px;width:391px;height:2px;background:#bdbad8"></div>
<div class="a" style="left:36px;top:321px;width:391px;height:1px;background:#95a576"></div>
<svg class="a" style="left:419px;top:639px" width="7" height="7" viewBox="0 0 7 7"><path d="M7 0V7H0z" fill="#5a78b8"/></svg>
<div class="a" style="left:489.6px;top:319.3px;width:809px;height:502px;background:#fff;border:2px solid #cdcdcd"></div>
<div class="t" style="left:694px;top:340px;width:400px;text-align:center;font-size:22px;color:#5a5a5a">Conference attedance</div>
<div class="a" style="left:548px;top:384.7px;width:731px;height:1px;background:#e6e6e6"></div>
<div class="t" style="left:483px;top:377.2px;width:50px;text-align:right;font-size:14px;color:#606060">3000</div>
<div class="a" style="left:548px;top:450.4px;width:731px;height:1px;background:#e6e6e6"></div>
<div class="t" style="left:483px;top:442.9px;width:50px;text-align:right;font-size:14px;color:#606060">2500</div>
<div class="a" style="left:548px;top:516.2px;width:731px;height:1px;background:#e6e6e6"></div>
<div class="t" style="left:483px;top:508.7px;width:50px;text-align:right;font-size:14px;color:#606060">2000</div>
<div class="a" style="left:548px;top:581.9px;width:731px;height:1px;background:#e6e6e6"></div>
<div class="t" style="left:483px;top:574.4px;width:50px;text-align:right;font-size:14px;color:#606060">1500</div>
<div class="a" style="left:548px;top:647.6px;width:731px;height:1px;background:#e6e6e6"></div>
<div class="t" style="left:483px;top:640.1px;width:50px;text-align:right;font-size:14px;color:#606060">1000</div>
<div class="a" style="left:548px;top:713.4px;width:731px;height:1px;background:#e6e6e6"></div>
<div class="t" style="left:483px;top:705.9px;width:50px;text-align:right;font-size:14px;color:#606060">500</div>
<div class="a" style="left:548px;top:779.1px;width:731px;height:1px;background:#dadada"></div>
<div class="t" style="left:483px;top:771.6px;width:50px;text-align:right;font-size:14px;color:#606060">0</div>
<div class="a" style="left:576.7px;top:666.7px;width:24.8px;height:112.9px;background:#5179c6"></div>
<div class="t" style="left:559.1px;top:793px;width:60px;text-align:center;font-size:14px;color:#606060">2012</div>
<div class="a" style="left:657.8px;top:641.6px;width:24.8px;height:138.0px;background:#5179c6"></div>
<div class="t" style="left:640.1px;top:793px;width:60px;text-align:center;font-size:14px;color:#606060">2013</div>
<div class="a" style="left:738.8px;top:651.4px;width:24.8px;height:128.2px;background:#5179c6"></div>
<div class="t" style="left:721.2px;top:793px;width:60px;text-align:center;font-size:14px;color:#606060">2014</div>
<div class="a" style="left:819.9px;top:621.8px;width:24.8px;height:157.8px;background:#5179c6"></div>
<div class="t" style="left:802.2px;top:793px;width:60px;text-align:center;font-size:14px;color:#606060">2015</div>
<div class="a" style="left:900.9px;top:582.4px;width:24.8px;height:197.2px;background:#5179c6"></div>
<div class="t" style="left:883.3px;top:793px;width:60px;text-align:center;font-size:14px;color:#606060">2016</div>
<div class="a" style="left:982.0px;top:543.0px;width:24.8px;height:236.6px;background:#5179c6"></div>
<div class="t" style="left:964.4px;top:793px;width:60px;text-align:center;font-size:14px;color:#606060">2017</div>
<div class="a" style="left:1063.0px;top:569.2px;width:24.8px;height:210.4px;background:#5179c6"></div>
<div class="t" style="left:1045.4px;top:793px;width:60px;text-align:center;font-size:14px;color:#606060">2018</div>
<div class="a" style="left:1144.0px;top:516.7px;width:24.8px;height:262.9px;background:#5179c6"></div>
<div class="t" style="left:1126.5px;top:793px;width:60px;text-align:center;font-size:14px;color:#606060">2019</div>
<div class="a" style="left:1225.1px;top:463.4px;width:24.8px;height:316.2px;background:#5179c6"></div>
<div class="t" style="left:1207.5px;top:793px;width:60px;text-align:center;font-size:14px;color:#606060">2020</div>
<div class="a" style="left:482.8px;top:312.5px;width:15.6px;height:15.6px;border-radius:50%;background:#fff;border:2.6px solid #9c9c9c"></div>
<div class="a" style="left:886.2px;top:312.5px;width:15.6px;height:15.6px;border-radius:50%;background:#fff;border:2.6px solid #9c9c9c"></div>
<div class="a" style="left:1289.8px;top:312.5px;width:15.6px;height:15.6px;border-radius:50%;background:#fff;border:2.6px solid #9c9c9c"></div>
<div class="a" style="left:482.8px;top:562.6px;width:15.6px;height:15.6px;border-radius:50%;background:#fff;border:2.6px solid #9c9c9c"></div>
<div class="a" style="left:1289.8px;top:562.6px;width:15.6px;height:15.6px;border-radius:50%;background:#fff;border:2.6px solid #9c9c9c"></div>
<div class="a" style="left:482.8px;top:812.5px;width:15.6px;height:15.6px;border-radius:50%;background:#fff;border:2.6px solid #9c9c9c"></div>
<div class="a" style="left:886.2px;top:812.5px;width:15.6px;height:15.6px;border-radius:50%;background:#fff;border:2.6px solid #9c9c9c"></div>
<div class="a" style="left:1289.8px;top:812.5px;width:15.6px;height:15.6px;border-radius:50%;background:#fff;border:2.6px solid #9c9c9c"></div>
<div class="a" style="left:1311.5px;top:320.5px;width:37px;height:36px;background:#fff;border:1.5px solid #d6d6d6"></div>
<div class="a" style="left:1311.5px;top:370px;width:37px;height:36px;background:#fff;border:1.5px solid #d6d6d6"></div>
<div class="a" style="left:1311.5px;top:419px;width:37px;height:36px;background:#fff;border:1.5px solid #d6d6d6"></div>
<svg class="a" style="left:1311.5px;top:320.5px" width="37" height="36" viewBox="0 0 37 36"><path d="M18.5 7v22M7.5 18h22" stroke="#86b594" stroke-width="1.6"/></svg>
<svg class="a" style="left:1311.5px;top:370px" width="37" height="36" viewBox="0 0 37 36"><path d="M29 6l-12 15" stroke="#8a8a8a" stroke-width="4" stroke-linecap="round"/><path d="M29 6l-12 15" stroke="#fff" stroke-width="1.5" stroke-dasharray="2 2"/><path d="M16 20c-3 0-5 2-6 4-1 2-2 3-3 3 3 1 8 0 10-3 1-1 1-3-1-4z" fill="#5b8fd8"/></svg>
<svg class="a" style="left:1311.5px;top:419px" width="37" height="36" viewBox="0 0 37 36"><path d="M7 7h23l-8.5 11v9.5h-6V18z" fill="none" stroke="#7a7a7a" stroke-width="2" stroke-linejoin="round"/><path d="M15.5 22h6v7h-6z" fill="#ababab"/></svg>
<div class="t" style="left:1305px;top:567px;font-size:17.6px;color:#e6e6e6">Want to add a trendline?</div>
<svg class="a" style="left:1285px;top:808px" width="64" height="90" viewBox="1285 808 64 90"><path d="M1294.2 816L1294.2 880L1309.9 865.5L1318.9 887.2L1327.7 883.6L1317.7 862.5L1338.8 862.5Z" fill="#fff" stroke="#000" stroke-width="3" stroke-linejoin="miter"/></svg>
</div></body></html>
